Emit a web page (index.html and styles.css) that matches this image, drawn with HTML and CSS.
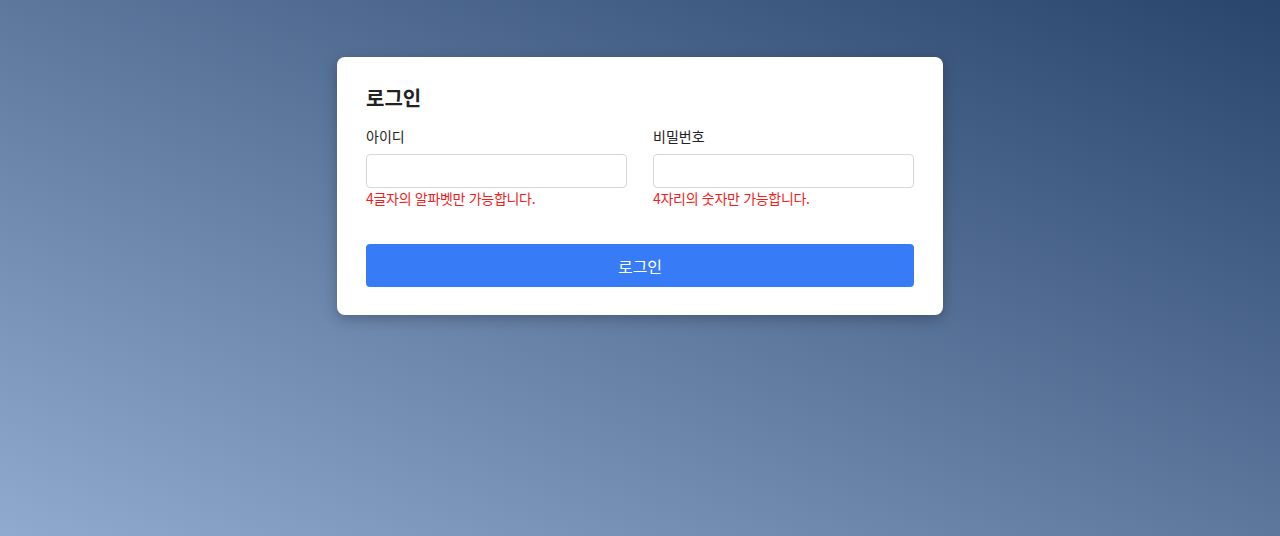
FILE: index.html
```html
<!DOCTYPE html>
<html lang="ko">
<head>
<meta charset="utf-8">
<link rel="stylesheet" href="styles.css">
</head>
<body>
<div class="page">
  <form class="card">
    <h2 class="title">로그인</h2>
    <div class="fields">
      <div class="field">
        <label class="label">아이디</label>
        <input class="input" type="text">
        <p class="error">4글자의 알파벳만 가능합니다.</p>
      </div>
      <div class="field">
        <label class="label">비밀번호</label>
        <input class="input" type="password">
        <p class="error">4자리의 숫자만 가능합니다.</p>
      </div>
    </div>
    <button class="btn" type="button">로그인</button>
  </form>
</div>
</body>
</html>
```

FILE: styles.css
```css
* { box-sizing: border-box; }
html, body { margin: 0; padding: 0; }
body {
  font-family: "Noto Sans CJK KR", "Noto Sans", sans-serif;
  color: #222;
  background: linear-gradient(to top right, #8fa9cf 0%, #2a456b 100%);
  min-height: 100vh;
}
.page {
  display: flex;
  justify-content: center;
  padding-top: 57px;
  min-height: 536px;
}
.card {
  width: 606px;
  height: 258px;
  background: #fff;
  border-radius: 8px;
  padding: 28px 29px;
  box-shadow: 0 4px 14px rgba(0, 0, 0, 0.25);
  display: flex;
  flex-direction: column;
}
.title {
  margin: 0;
  font-size: 20px;
  font-weight: 700;
  line-height: 25px;
  color: #222;
}
.fields {
  display: grid;
  grid-template-columns: 261px 261px;
  column-gap: 26px;
  margin-top: 16px;
}
.field { display: flex; flex-direction: column; }
.label {
  font-size: 14px;
  line-height: 21px;
  margin-bottom: 7px;
  color: #222;
}
.input {
  height: 34px;
  border: 1px solid #d6d6d6;
  border-radius: 4px;
  padding: 0 8px;
  font-size: 14px;
  outline: none;
}
.error {
  margin: 0;
  font-size: 14px;
  line-height: 20px;
  letter-spacing: -0.3px;
  color: #f21d1d;
}
.btn {
  margin-top: 36px;
  height: 43px;
  width: 548px;
  border: none;
  border-radius: 4px;
  background: #377cf6;
  color: #fff;
  font-family: "Noto Sans CJK KR", "Noto Sans", sans-serif;
  font-size: 16px;
}
```
